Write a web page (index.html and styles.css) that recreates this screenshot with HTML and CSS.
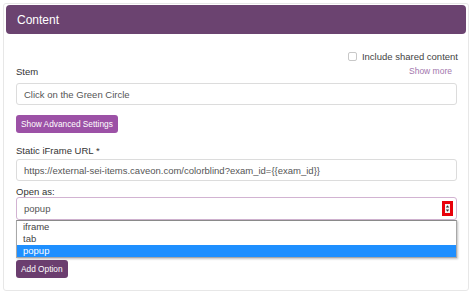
FILE: index.html
```html
<!DOCTYPE html>
<html>
<head>
<meta charset="utf-8">
<link rel="stylesheet" href="styles.css">
</head>
<body>
<div class="card">
  <div class="header">Content</div>
  <div class="body">
    <div class="checkrow">
      <span class="checkbox"></span>
      <span class="checklabel">Include shared content</span>
    </div>
    <div class="labelrow">
      <span class="label">Stem</span>
      <span class="showmore">Show more</span>
    </div>
    <div class="input">Click on the Green Circle</div>
    <div class="btn btn-light">Show Advanced Settings</div>
    <div class="label label-block label-url">Static iFrame URL *</div>
    <div class="input input-url">https://external-sei-items.caveon.com/colorblind?exam_id={{exam_id}}</div>
    <div class="label label-block label-open">Open as:</div>
    <div class="selectwrap">
      <div class="select">
        <span>popup</span>
        <svg class="arrow" width="11" height="15" viewBox="0 0 11 15">
          <rect x="0" y="0" width="11" height="15" fill="#e8000b"/>
          <rect x="3" y="3" width="5" height="9" fill="#f4f4f4"/>
          <path d="M5.5 4.3 L7.2 6.6 L3.8 6.6 Z" fill="#333"/>
          <path d="M5.5 10.7 L7.2 8.4 L3.8 8.4 Z" fill="#333"/>
        </svg>
      </div>
      <div class="dropdown">
        <div class="opt">iframe</div>
        <div class="opt">tab</div>
        <div class="opt opt-sel">popup</div>
      </div>
    </div>
    <div class="btn btn-dark">Add Option</div>
  </div>
</div>
</body>
</html>
```
FILE: styles.css
```css
* { box-sizing: border-box; }
html, body { margin: 0; padding: 0; background: #ffffff; }
body {
  font-family: "Liberation Sans", Arial, sans-serif;
  font-size: 9.5px;
  color: #333333;
}
.card {
  margin: 3px 0 0 3px;
  width: 466px;
  height: 288px;
  border: 1px solid #e7e7e7;
  border-radius: 3px;
  display: flex;
  flex-direction: column;
}
.header {
  margin: 1px 2px 0 2px;
  height: 29px;
  background: #6b4370;
  border-radius: 4px;
  color: #ffffff;
  font-size: 12px;
  padding-left: 11px;
  display: flex;
  align-items: center;
}
.body {
  padding: 0 11px 0 12px;
  display: flex;
  flex-direction: column;
}
.checkrow {
  margin-top: 15px;
  height: 14px;
  display: flex;
  align-items: center;
  justify-content: flex-end;
  gap: 5px;
  margin-right: -1px;
}
.checkbox {
  width: 9px;
  height: 9px;
  border: 1px solid #c8c8c8;
  border-radius: 2px;
  background: #fff;
}
.checklabel { color: #444; }
.labelrow {
  margin-top: 2px;
  height: 12px;
  display: flex;
  align-items: center;
  justify-content: space-between;
}
.showmore {
  font-size: 8.5px;
  color: #a276ad;
  margin-right: 5px;
}
.label { color: #333; }
.label-block { height: 12px; display: flex; align-items: center; }
.input {
  margin-top: 6px;
  height: 22px;
  border: 1px solid #dcdcdc;
  border-radius: 3px;
  padding: 0 7px;
  display: flex;
  align-items: center;
  color: #555;
  white-space: nowrap;
  overflow: hidden;
}
.btn {
  height: 18px;
  border-radius: 3px;
  color: #ffffff;
  font-size: 8.3px;
  display: flex;
  align-items: center;
  align-self: flex-start;
  padding: 0 5px;
  white-space: nowrap;
}
.btn-light {
  margin-top: 10px;
  background: #9c51a6;
}
.label-url { margin-top: 11px; }
.input-url { margin-top: 3px; }
.label-open { margin-top: 4px; }
.selectwrap { position: relative; }
.select {
  height: 23px;
  border: 1px solid #d2b3d2;
  border-radius: 3px;
  padding: 0 3px 0 7px;
  display: flex;
  align-items: center;
  justify-content: space-between;
  color: #555;
}
.arrow { display: block; }
.dropdown {
  position: absolute;
  left: 0;
  right: 0;
  top: 23px;
  border: 1px solid #a8a8a8;
  border-top: 1px solid #8a8a8a;
  background: #ffffff;
  box-shadow: 1px 1px 2px rgba(0,0,0,0.25);
  z-index: 2;
}
.opt {
  height: 12px;
  line-height: 12px;
  padding-left: 6px;
  color: #444;
}
.opt-sel {
  background: #1e8fff;
  color: #ffffff;
}
.btn-dark {
  margin-top: 40px;
  background: #6b3e6f;
}
```
